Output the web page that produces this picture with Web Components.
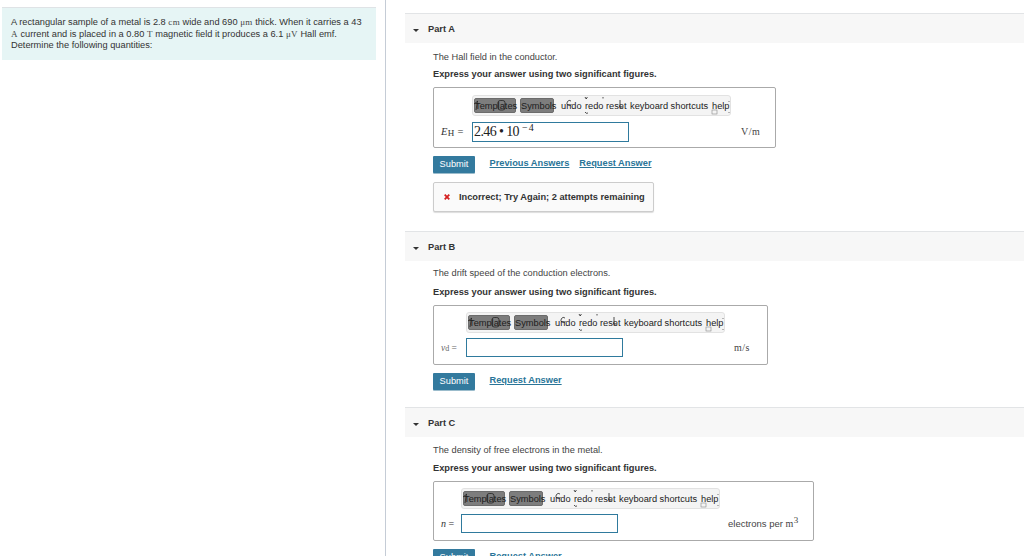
<!doctype html>
<html>
<head>
<meta charset="utf-8">
<title>Hall effect</title>
<style>
  html, body { margin: 0; padding: 0; height: 556px; overflow: hidden; background: #fff; }
  body { font: 9.25px "Liberation Sans", Arial, sans-serif; color: #333; }
  i.u { font: 9px "Liberation Serif", serif; color: #444; letter-spacing: .3px; }
  i.r { font-style: normal; }
</style>
</head>
<body>
<x-page>
  <x-problem slot="left">A rectangular sample of a metal is 2.8 <i class="u r">cm</i> wide and 690 <i class="u">μ</i><i class="u r">m</i> thick. When it carries a 43<br><i class="u r">A</i> current and is placed in a 0.80 <i class="u r">T</i> magnetic field it produces a 6.1 <i class="u">μ</i><i class="u r">V</i> Hall emf.<br>Determine the following quantities:</x-problem>

  <x-part name="Part A" text="The Hall field in the conductor." gap="19" lead="8" after="5">
    <x-answer width="343" indent="39" unit-gap="112" links="prev" tall>
      <span slot="label" style="font-size:10.5px;letter-spacing:.3px"><i>E</i><span style="font-size:9px;position:relative;top:1px">H</span> =</span>
      <span slot="value" style="font:14px/18px 'Liberation Serif',serif;letter-spacing:-.6px;color:#222;padding-left:1px;white-space:nowrap">2.46 • 10<sup style="font-size:10px;line-height:0;margin-left:3px;letter-spacing:1px;position:relative;top:1px">−4</sup></span>
      <span slot="unit">V/m</span>
    </x-answer>
    <x-feedback>Incorrect; Try Again; 2 attempts remaining</x-feedback>
  </x-part>

  <x-part name="Part B" text="The drift speed of the conduction electrons." gap="17" lead="6" after="7">
    <x-answer width="335" indent="33" unit-gap="111">
      <span slot="label" style="font-size:9.5px;color:#666"><i>v</i><span style="font-size:8px">d</span> =</span>
      <span slot="unit">m/s</span>
    </x-answer>
  </x-part>

  <x-part name="Part C" text="The density of free electrons in the metal." gap="20" lead="6.5" after="6.5">
    <x-answer width="381" indent="28" unit-gap="110">
      <span slot="label"><i>n</i> =</span>
      <span slot="unit" style="font-family:'Liberation Sans',sans-serif;font-size:9.5px;letter-spacing:0;color:#444">electrons per <span style="font-family:'Liberation Serif',serif;font-size:10px;letter-spacing:.4px">m<sup style="font-size:9px;line-height:0">3</sup></span></span>
    </x-answer>
  </x-part>
</x-page>

<script>
const sans = '"Liberation Sans", Arial, sans-serif';

class XPage extends HTMLElement {
  constructor() {
    super();
    this.attachShadow({ mode: 'open' }).innerHTML = `
      <style>
        :host { display: grid; grid-template-columns: 386px 1fr; height: 556px; overflow: hidden; }
        .left { border-right: 1px solid #c5ccd6; padding: 7px 9px 0 2px; }
        .right { padding: 13px 0 0 19px; min-width: 0; }
      </style>
      <div class="left"><slot name="left"></slot></div>
      <div class="right"><slot></slot></div>`;
  }
}

class XProblem extends HTMLElement {
  constructor() {
    super();
    this.attachShadow({ mode: 'open' }).innerHTML = `
      <style>
        :host { display: block; background: #e6f5f5; border-top: 1px solid #dfe3e6;
                padding: 9px; height: 34px; font-size: 9.25px; line-height: 11.5px; color: #333; white-space: nowrap; }
      </style><slot></slot>`;
  }
}

class XPart extends HTMLElement {
  constructor() {
    super();
    const root = this.attachShadow({ mode: 'open' });
    root.innerHTML = `
      <style>
        :host { display: block; }
        .head { height: 29px; background: #f7f7f7; border-top: 1px solid #e2e4e6;
                display: flex; align-items: center; gap: 9px; padding-left: 8px;
                font: bold 9.25px ${sans}; color: #333; }
        .arrow { width: 0; height: 0; border: 3px solid transparent; border-top: 3.5px solid #333; border-bottom: 0; margin-top: 3px; }
        .body { padding: ${this.getAttribute('lead')}px 0 0 28px; }
        p { margin: 0; font-size: 9.25px; line-height: 12px; color: #444; }
        p.b { margin-top: ${this.getAttribute('after')}px; font-weight: bold; color: #333; }
        .slot { display: block; margin-top: 7px; }
      </style>
      <div class="head"><div class="arrow"></div><span class="name"></span></div>
      <div class="body">
        <p class="t"></p>
        <p class="b">Express your answer using two significant figures.</p>
        <div class="slot"><slot></slot></div>
      </div>`;
    root.querySelector('.name').textContent = this.getAttribute('name');
    root.querySelector('.t').textContent = this.getAttribute('text');
    this.style.marginBottom = (this.getAttribute('gap') || 0) + 'px';
  }
}

class XToolbar extends HTMLElement {
  constructor() {
    super();
    this.attachShadow({ mode: 'open' }).innerHTML = `
      <style>
        :host { display: flex; align-items: center; position: relative; box-sizing: border-box; width: 259px; height: 21px;
                background: #f4f4f4; border: 1px solid #e2e2e2; border-radius: 3px; padding-left: 1px;
                font: 9.25px ${sans}; color: #222; white-space: nowrap; }
        b { font-weight: normal; display: block; flex: none; height: 15px; line-height: 14px; background: #7d7d7d; border: 1px solid #6c6c6c;
            border-radius: 2px; box-sizing: border-box; color: #1c1c1c; }
        .tpl { width: 42px; margin-right: 4px; }
        .sym { width: 34px; margin-right: 7px; text-align: center; }
        span { display: block; flex: none; }
        svg { position: absolute; left: -1px; top: -1px; overflow: visible; }
      </style>
      <b class="tpl">Templates</b><b class="sym">Symbols</b>
      <span style="width:24px">undo</span><span style="width:21px">redo</span><span style="width:24px">reset</span>
      <span style="width:82px">keyboard shortcuts</span><span>help</span>
      <svg width="259" height="21" fill="none" stroke="#222" stroke-width=".8">
        <path d="M2 9 L6 6 M5.5 6 L4 15"/>
        <rect x="26" y="5.5" width="7" height="9.5" rx="2.2"/>
        <path d="M99 6 a2.5 2.5 0 1 0 .5 3.5"/>
        <path d="M113 2 l1.2 2 l1.2-2 M113 17 a2.2 2.2 0 0 0 3 1 M131 2 v1.5 M148 5 v7 a2 2 0 0 0 3.5 0"/>
        <rect x="240" y="15" width="5" height="4" stroke="#888" stroke-width=".6"/>
        <path d="M257 6 v1 M257 17 v1" stroke="#555"/>
      </svg>`;
  }
}

class XAnswer extends HTMLElement {
  constructor() {
    super();
    const root = this.attachShadow({ mode: 'open' });
    const prev = this.getAttribute('links') === 'prev';
    const tall = this.hasAttribute('tall');
    root.innerHTML = `
      <style>
        :host { display: block; }
        .box { box-sizing: border-box; width: ${this.getAttribute('width')}px; height: ${tall ? 61 : 60}px; border: 1px solid #aaa; border-radius: 2px;
               background: #fff; padding: ${tall ? 7 : 6}px 0 0 ${+this.getAttribute('indent') - 1}px; position: relative; }
        .row { display: flex; align-items: center; margin-top: ${tall ? 6 : 5}px; }
        .label { position: absolute; left: 7px; width: 28px; font: 10px "Liberation Serif", serif; color: #333; white-space: nowrap; margin-bottom: ${tall ? 2 : 0}px; }
        .input { box-sizing: border-box; width: 157px; height: ${tall ? 20 : 19}px; border: 1px solid #2f7a9d; background: #fff; overflow: hidden; }
        .unit { margin-left: ${this.getAttribute('unit-gap')}px; font: 10px "Liberation Serif", serif; letter-spacing: .5px; color: #444; white-space: nowrap; margin-bottom: ${tall ? 2 : 0}px; }
        .actions { display: flex; align-items: center; margin-top: 8px; height: 17px; font: bold 9.25px ${sans}; }
        .submit { box-sizing: border-box; width: 42px; height: 17px; background: #337a9e; color: #fff; border-radius: 1px;
                  font-weight: normal; text-align: center; line-height: 17px; margin-right: 14.5px; box-shadow: 0 1px 0 #9bbccc; }
        a { color: #2a7598; text-decoration: underline; margin: 0 10px 3px 0; white-space: nowrap; }
      </style>
      <div class="box">
        <x-toolbar></x-toolbar>
        <div class="row">
          <div class="label"><slot name="label"></slot></div>
          <div class="input"><slot name="value"></slot></div>
          <div class="unit"><slot name="unit"></slot></div>
        </div>
      </div>
      <div class="actions">
        <div class="submit">Submit</div>
        ${prev ? '<a>Previous Answers</a>' : ''}<a>Request Answer</a>
      </div>`;
  }
}

class XFeedback extends HTMLElement {
  constructor() {
    super();
    this.attachShadow({ mode: 'open' }).innerHTML = `
      <style>
        :host { display: flex; align-items: center; box-sizing: border-box; width: 221px; height: 30px; margin-top: 9px;
                background: #fafafa; border: 1px solid #ccc; border-radius: 2px; box-shadow: 0 1px 1px #ddd;
                padding-left: 10px; font: bold 9.25px ${sans}; color: #333; white-space: nowrap; }
        svg { margin-right: 9px; flex: none; }
      </style>
      <svg width="6" height="6" viewBox="0 0 6 6"><path d="M.7.7 5.3 5.3M5.3.7.7 5.3" stroke="#d42020" stroke-width="1.8"/></svg>
      <slot></slot>`;
  }
}

customElements.define('x-page', XPage);
customElements.define('x-problem', XProblem);
customElements.define('x-part', XPart);
customElements.define('x-toolbar', XToolbar);
customElements.define('x-answer', XAnswer);
customElements.define('x-feedback', XFeedback);
</script>
</body>
</html>
